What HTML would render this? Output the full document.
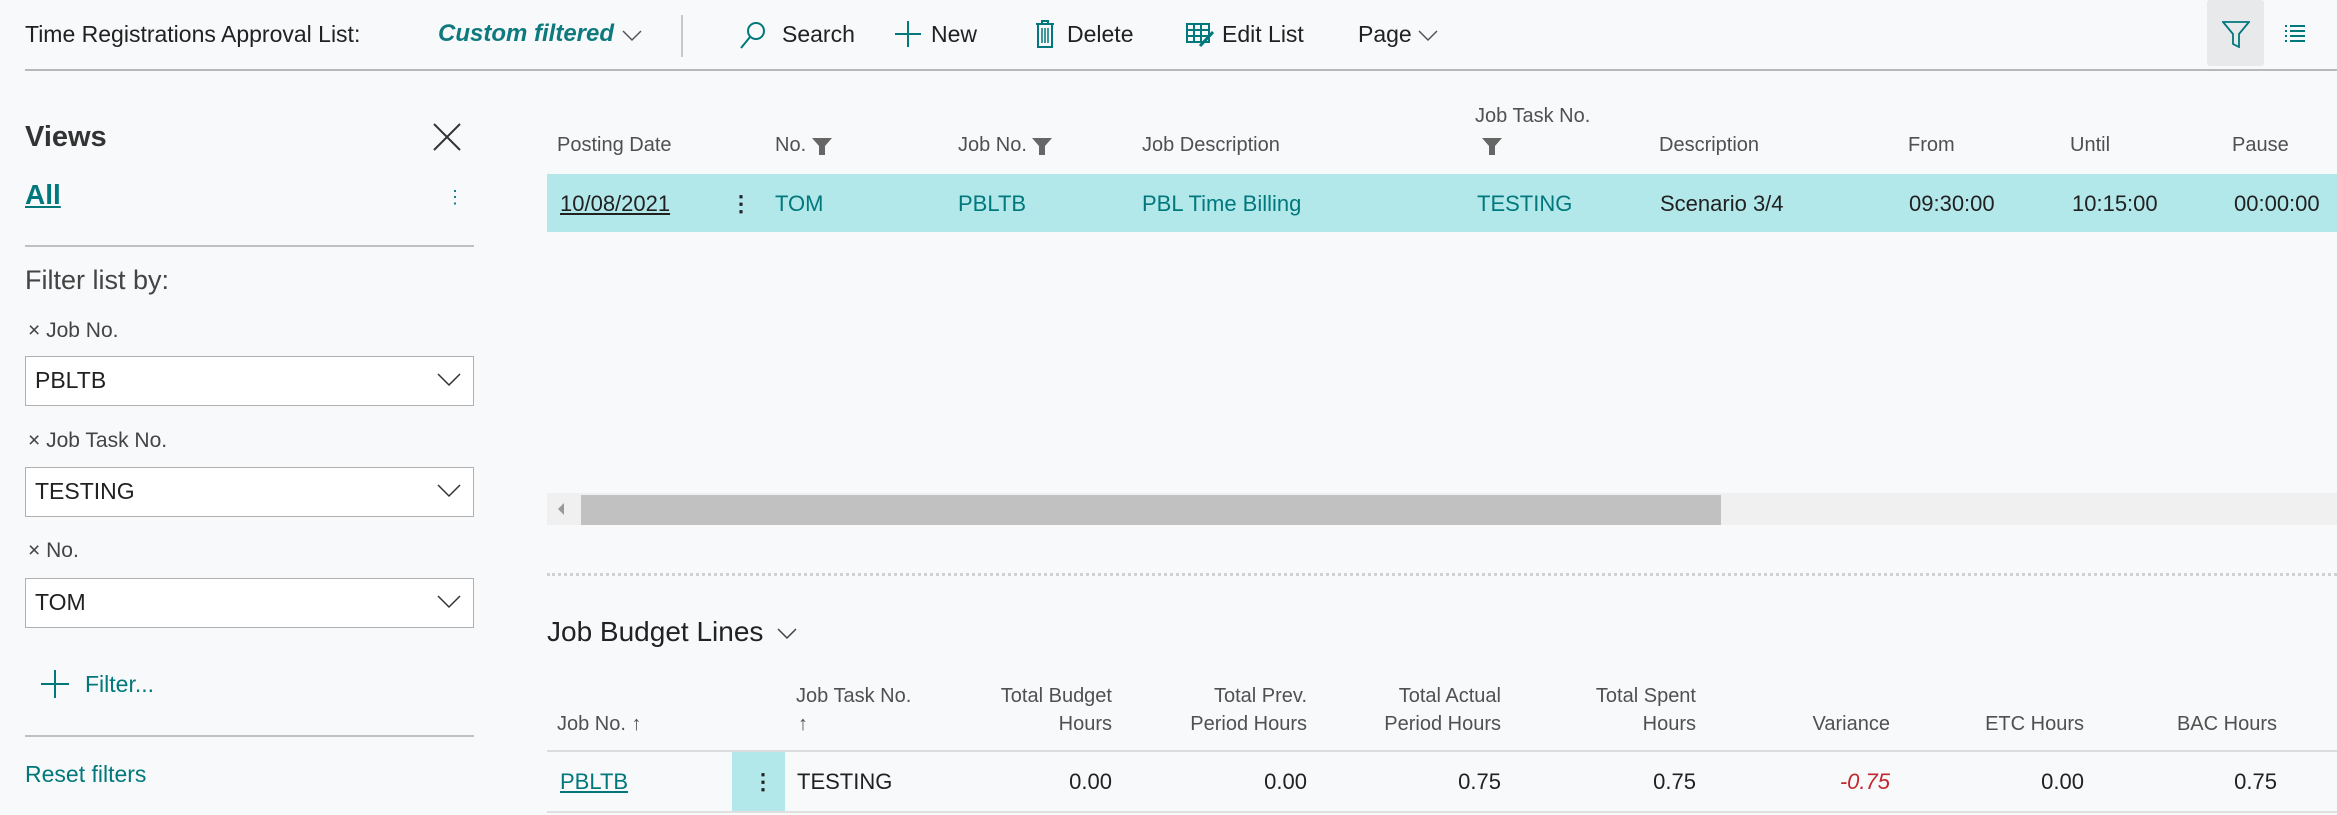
<!DOCTYPE html>
<html><head><meta charset="utf-8"><style>
*{margin:0;padding:0;box-sizing:border-box}
body{width:2337px;height:815px;background:#f8f9fa;font-family:"Liberation Sans",sans-serif;color:#212121;position:relative;overflow:hidden}
.t{position:absolute;line-height:30px;white-space:nowrap}
.h{font-size:20px;color:#505050}
.v{font-size:22px}
.teal{color:#00787c}
.r{text-align:right}
.box{position:absolute;left:25px;width:449px;height:50px;background:#fff;border:1.5px solid #b0b0b0}
.box span{position:absolute;left:9px;top:10px;font-size:23px}
.box svg{position:absolute;right:12px;top:16px}
.line{position:absolute;background:#c8c8c8}
.fn{display:inline-block;vertical-align:middle}
</style></head><body>
<div class="t" style="left:25px;top:19px;font-size:23px">Time Registrations Approval List:</div>
<div class="t teal" style="left:438px;top:19px;font-size:24px;font-style:italic;font-weight:bold;color:#0e7a7e">Custom filtered</div>
<svg style="position:absolute;left:622px;top:30px" width="20" height="12"><path d="M1 1 L10 10 L19 1" stroke="#555" stroke-width="1.5" fill="none"/></svg>
<div class="line" style="left:681px;top:15px;width:1.5px;height:42px"></div>
<svg style="position:absolute;left:738px;top:20px" width="30" height="30"><circle cx="18" cy="11" r="8" stroke="#00787c" stroke-width="2" fill="none"/><path d="M12 17 L3 28" stroke="#00787c" stroke-width="2"/></svg>
<div class="t" style="left:782px;top:19px;font-size:23px">Search</div>
<svg style="position:absolute;left:894px;top:20px" width="28" height="28"><path d="M14 1V27M1 14H27" stroke="#00787c" stroke-width="2"/></svg>
<div class="t" style="left:931px;top:19px;font-size:23px">New</div>
<svg style="position:absolute;left:1034px;top:19px" width="22" height="30"><path d="M2 5H20M8 5V2H14V5M4 5V28H18V5" stroke="#00787c" stroke-width="2" fill="none"/><path d="M8 9V24M11 9V24M14 9V24" stroke="#00787c" stroke-width="1.5"/></svg>
<div class="t" style="left:1067px;top:19px;font-size:23px">Delete</div>
<svg style="position:absolute;left:1186px;top:22px" width="30" height="26"><rect x="1" y="2" width="22" height="18" stroke="#00787c" stroke-width="2" fill="none"/><path d="M1 8H23M1 14H23M8 2V20M15 2V20" stroke="#00787c" stroke-width="2"/><path d="M14 24L27 10" stroke="#00787c" stroke-width="3"/></svg>
<div class="t" style="left:1222px;top:19px;font-size:23px">Edit List</div>
<div class="t" style="left:1358px;top:19px;font-size:23px">Page</div>
<svg style="position:absolute;left:1418px;top:30px" width="20" height="12"><path d="M1 1 L10 10 L19 1" stroke="#555" stroke-width="1.5" fill="none"/></svg>
<div style="position:absolute;left:2207px;top:0;width:57px;height:66px;background:#e8e9ea;border-radius:3px"></div>
<svg style="position:absolute;left:2222px;top:20px" width="28" height="28"><path d="M1 2H27L17 14V27L11 24V14Z" stroke="#00787c" stroke-width="1.8" fill="none"/></svg>
<svg style="position:absolute;left:2284px;top:24px" width="22" height="20"><path d="M6 2H21M6 7H21M6 12H21M6 17H21M1 2H3M1 7H3M1 12H3M1 17H3" stroke="#00787c" stroke-width="2"/></svg>
<div class="line" style="left:25px;top:69px;width:2312px;height:2px;background:#b8b8b8"></div>

<div class="t" style="left:25px;top:122px;font-size:29px;font-weight:bold;color:#333">Views</div>
<svg style="position:absolute;left:432px;top:122px" width="30" height="30"><path d="M2 2L28 28M28 2L2 28" stroke="#333" stroke-width="2"/></svg>
<div class="t teal" style="left:25px;top:180px;font-size:28px;font-weight:bold;text-decoration:underline">All</div>
<div class="t teal" style="left:446px;top:182px;font-size:18px">&#8942;</div>
<div class="line" style="left:25px;top:245px;width:449px;height:2px;background:#c0c0c0"></div>
<div class="t" style="left:25px;top:265px;font-size:27px;color:#444">Filter list by:</div>
<div class="t" style="left:28px;top:316px;font-size:21px;color:#444">× Job No.</div>
<div class="box" style="top:356px"><span>PBLTB</span><svg width="24" height="14"><path d="M1 1L12 12L23 1" stroke="#333" stroke-width="1.5" fill="none"/></svg></div>
<div class="t" style="left:28px;top:426px;font-size:21px;color:#444">× Job Task No.</div>
<div class="box" style="top:467px"><span>TESTING</span><svg width="24" height="14"><path d="M1 1L12 12L23 1" stroke="#333" stroke-width="1.5" fill="none"/></svg></div>
<div class="t" style="left:28px;top:536px;font-size:21px;color:#444">× No.</div>
<div class="box" style="top:578px"><span>TOM</span><svg width="24" height="14"><path d="M1 1L12 12L23 1" stroke="#333" stroke-width="1.5" fill="none"/></svg></div>
<svg style="position:absolute;left:40px;top:669px" width="30" height="30"><path d="M15 1V29M1 15H29" stroke="#00787c" stroke-width="2"/></svg>
<div class="t teal" style="left:85px;top:669px;font-size:23px">Filter...</div>
<div class="line" style="left:25px;top:735px;width:449px;height:2px;background:#c0c0c0"></div>
<div class="t teal" style="left:25px;top:759px;font-size:23px">Reset filters</div>

<div class="t h" style="left:557px;top:130px">Posting Date</div>
<div class="t h" style="left:775px;top:130px">No. <svg class="fn" width="20" height="20"><path d="M0 2H20L13 10V19H7V10Z" fill="#666"/></svg></div>
<div class="t h" style="left:958px;top:130px">Job No. <svg class="fn" width="20" height="20"><path d="M0 2H20L13 10V19H7V10Z" fill="#666"/></svg></div>
<div class="t h" style="left:1142px;top:130px">Job Description</div>
<div class="t h" style="left:1475px;top:101px">Job Task No.</div>
<div class="t h" style="left:1482px;top:130px"><svg class="fn" width="20" height="20"><path d="M0 2H20L13 10V19H7V10Z" fill="#666"/></svg></div>
<div class="t h" style="left:1659px;top:130px">Description</div>
<div class="t h" style="left:1908px;top:130px">From</div>
<div class="t h" style="left:2070px;top:130px">Until</div>
<div class="t h" style="left:2232px;top:130px">Pause</div>
<div style="position:absolute;left:547px;top:174px;width:1790px;height:58px;background:#b3e8eb"></div>
<div class="t v" style="left:560px;top:189px;text-decoration:underline">10/08/2021</div>
<div class="t v" style="left:730px;top:189px;font-weight:bold">&#8942;</div>
<div class="t v teal" style="left:775px;top:189px">TOM</div>
<div class="t v teal" style="left:958px;top:189px">PBLTB</div>
<div class="t v teal" style="left:1142px;top:189px">PBL Time Billing</div>
<div class="t v teal" style="left:1477px;top:189px">TESTING</div>
<div class="t v" style="left:1660px;top:189px">Scenario 3/4</div>
<div class="t v" style="left:1909px;top:189px">09:30:00</div>
<div class="t v" style="left:2072px;top:189px">10:15:00</div>
<div class="t v" style="left:2234px;top:189px">00:00:00</div>
<div style="position:absolute;left:547px;top:493px;width:1790px;height:32px;background:#f0f0f0"></div>
<svg style="position:absolute;left:556px;top:502px" width="10" height="14"><path d="M8 1L2 7L8 13Z" fill="#999"/></svg>
<div style="position:absolute;left:581px;top:495px;width:1140px;height:30px;background:#c1c1c1"></div>
<div style="position:absolute;left:547px;top:573px;width:1790px;border-top:3px dotted #d0d1d3"></div>

<div class="t" style="left:547px;top:617px;font-size:28px;color:#222">Job Budget Lines</div>
<svg style="position:absolute;left:777px;top:628px" width="20" height="12"><path d="M1 1L10 10L19 1" stroke="#444" stroke-width="1.5" fill="none"/></svg>
<div class="t h" style="left:557px;top:709px">Job No. ↑</div>
<div class="t h" style="left:796px;top:681px">Job Task No.</div>
<div class="t h" style="left:798px;top:709px">↑</div>
<div class="t h r" style="left:912px;width:200px;top:681px">Total Budget</div><div class="t h r" style="left:912px;width:200px;top:709px">Hours</div>
<div class="t h r" style="left:1107px;width:200px;top:681px">Total Prev.</div><div class="t h r" style="left:1107px;width:200px;top:709px">Period Hours</div>
<div class="t h r" style="left:1301px;width:200px;top:681px">Total Actual</div><div class="t h r" style="left:1301px;width:200px;top:709px">Period Hours</div>
<div class="t h r" style="left:1496px;width:200px;top:681px">Total Spent</div><div class="t h r" style="left:1496px;width:200px;top:709px">Hours</div>
<div class="t h r" style="left:1690px;width:200px;top:709px">Variance</div>
<div class="t h r" style="left:1884px;width:200px;top:709px">ETC Hours</div>
<div class="t h r" style="left:2077px;width:200px;top:709px">BAC Hours</div>
<div class="line" style="left:547px;top:750px;width:1790px;height:2px;background:#dcdcdc"></div>
<div style="position:absolute;left:732px;top:752px;width:53px;height:59px;background:#b3e8eb"></div>
<div class="t v" style="left:752px;top:767px;font-weight:bold">&#8942;</div>
<div class="t v teal" style="left:560px;top:767px;text-decoration:underline">PBLTB</div>
<div class="t v" style="left:797px;top:767px">TESTING</div>
<div class="t v r" style="left:912px;width:200px;top:767px">0.00</div>
<div class="t v r" style="left:1107px;width:200px;top:767px">0.00</div>
<div class="t v r" style="left:1301px;width:200px;top:767px">0.75</div>
<div class="t v r" style="left:1496px;width:200px;top:767px">0.75</div>
<div class="t v r" style="left:1690px;width:200px;top:767px;color:#c4262e;font-style:italic">-0.75</div>
<div class="t v r" style="left:1884px;width:200px;top:767px">0.00</div>
<div class="t v r" style="left:2077px;width:200px;top:767px">0.75</div>
<div class="line" style="left:547px;top:811px;width:1790px;height:2px;background:#e0e0e0"></div>
</body></html>
